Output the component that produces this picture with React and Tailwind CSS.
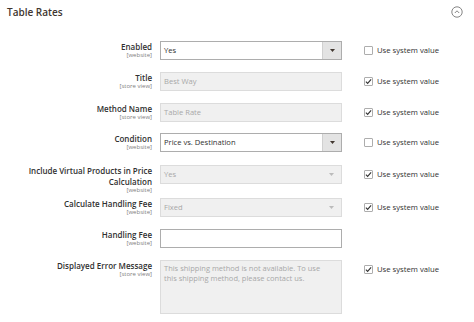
import React from "react";

const rows = [
  { label: "Enabled", scope: "[website]", type: "select", value: "Yes", system: false, h: "h-[31px]" },
  { label: "Title", scope: "[store view]", type: "input", value: "Best Way", disabled: true, system: true, h: "h-[31px]" },
  { label: "Method Name", scope: "[store view]", type: "input", value: "Table Rate", disabled: true, system: true, h: "h-[30px]" },
  { label: "Condition", scope: "[website]", type: "select", value: "Price vs. Destination", system: false, h: "h-[32px]" },
  { label: "Include Virtual Products in Price Calculation", scope: "[website]", type: "select", value: "Yes", disabled: true, system: true, h: "h-[33px]" },
  { label: "Calculate Handling Fee", scope: "[website]", type: "select", value: "Fixed", disabled: true, system: true, h: "h-[31px]" },
  { label: "Handling Fee", scope: "[website]", type: "input", value: "", system: null, h: "h-[31px]" },
  {
    label: "Displayed Error Message",
    scope: "[store view]",
    type: "textarea",
    value: "This shipping method is not available. To use this shipping method, please contact us.",
    disabled: true,
    system: true,
    h: "h-[58px]",
  },
];

function Checkbox({ checked }) {
  return (
    <span className="w-[9px] h-[9px] border border-[#adadad] rounded-[1px] bg-white flex items-center justify-center">
      {checked && (
        <svg width="7" height="7" viewBox="0 0 8 8">
          <path d="M1 4.2 L3 6.2 L7 1.6" fill="none" stroke="#333" strokeWidth="1.3" />
        </svg>
      )}
    </span>
  );
}

function Field({ row }) {
  const base = row.disabled
    ? "bg-[#f0f0f0] border-[#dcdcdc] text-[#a8a8a8]"
    : "bg-white border-[#adadad] text-[#303030]";

  if (row.type === "textarea") {
    return (
      <div className={`w-[182px] h-[54px] border pl-[3px] pr-[12px] pt-[2px] text-[7.5px] leading-[10px] ${base}`}>
        {row.value}
      </div>
    );
  }

  return (
    <div className={`w-[182px] h-[19px] border flex items-center text-[7.6px] ${base}`}>
      <span className="flex-1 pl-[3px]">{row.value}</span>
      {row.type === "select" && (
        <span
          className={`w-[19px] h-full flex items-center justify-center ${
            row.disabled ? "" : "bg-[#e3e3e3] border-l border-[#d0d0d0]"
          }`}
        >
          <svg width="5" height="3" viewBox="0 0 5 3">
            <path d="M0 0 H5 L2.5 3 Z" fill={row.disabled ? "#bbb" : "#41362f"} />
          </svg>
        </span>
      )}
    </div>
  );
}

export default function App() {
  return (
    <div className="w-[474px] h-[322px] bg-white text-[#303030] font-['Open_Sans',sans-serif] overflow-hidden">
      {/* Header */}
      <div className="flex items-center justify-between pl-[7px] pr-[11px] h-[24px]">
        <h2 className="text-[10px] font-semibold text-[#41362f]">Table Rates</h2>
        <svg width="12" height="12" viewBox="0 0 12 12">
          <circle cx="6" cy="6" r="5.2" fill="none" stroke="#777" strokeWidth="0.9" />
          <path d="M3.8 7 L6 4.8 L8.2 7" fill="none" stroke="#777" strokeWidth="0.9" />
        </svg>
      </div>

      {/* Fields */}
      <div className="flex flex-col pt-[17px]">
        {rows.map((row) => (
          <div key={row.label} className={`flex items-start ${row.h}`}>
            <div className="w-[126px] ml-[26px] text-right">
              <div className="text-[8px] leading-[11px] font-semibold text-[#303030]">{row.label}</div>
              <div className="text-[6px] leading-[6px] text-[#808080]">{row.scope}</div>
            </div>
            <div className="ml-[8px]">
              <Field row={row} />
            </div>
            {row.system !== null && (
              <div className="ml-[22px] h-[19px] flex items-center gap-[4px]">
                <Checkbox checked={row.system} />
                <span className="text-[7.7px] text-[#303030]">Use system value</span>
              </div>
            )}
          </div>
        ))}
      </div>
    </div>
  );
}
